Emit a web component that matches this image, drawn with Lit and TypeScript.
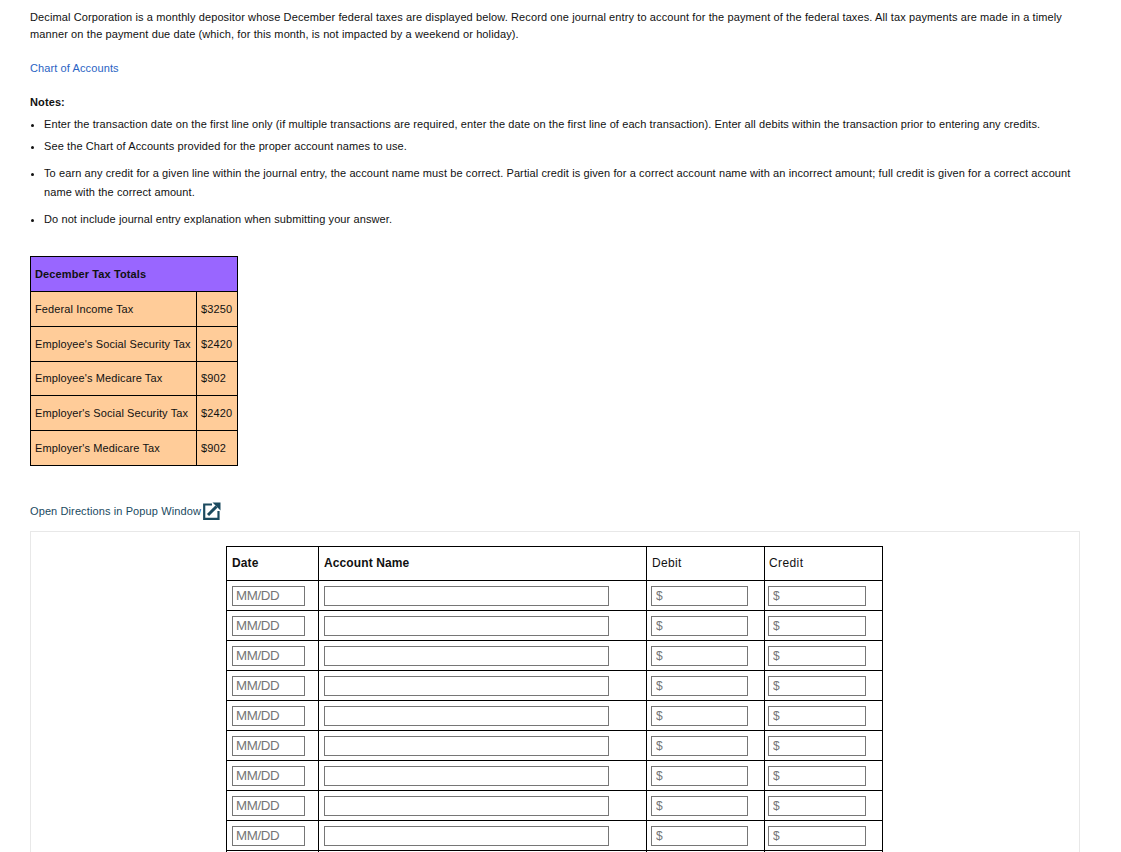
import { LitElement, html, css } from "lit";
import { customElement } from "lit/decorators.js";
import { classMap } from "lit/directives/class-map.js";

const taxes: [string, string][] = [
  ["Federal Income Tax", "$3250"],
  ["Employee's Social Security Tax", "$2420"],
  ["Employee's Medicare Tax", "$902"],
  ["Employer's Social Security Tax", "$2420"],
  ["Employer's Medicare Tax", "$902"],
];

@customElement("app-root")
export class AppRoot extends LitElement {
  static styles = css`
    :host {
      display: block;
      height: 852px;
      overflow: hidden;
      background: #fff;
      color: #111;
      font: 11px/17px "Liberation Sans", Arial, sans-serif;
      letter-spacing: 0.11px;
    }
    .page { padding: 9px 41px 0 30px; }
    p { margin: 0; }
    .link { display: block; margin-top: 17px; color: #2a63c4; }
    .notes { margin-top: 17px; font-weight: 700; }
    ul { list-style: none; margin: 4px 0 0; padding: 0; }
    li { position: relative; padding-left: 14px; line-height: 19px; margin-bottom: 8px; letter-spacing: 0.1px; }
    li.tight { margin-bottom: 3px; }
    li::before {
      content: "";
      position: absolute;
      left: 1px;
      top: 9px;
      width: 3px;
      height: 3px;
      border-radius: 50%;
      background: #111;
    }
    .tax {
      border-collapse: collapse;
      table-layout: fixed;
      width: 207px;
      margin-top: 27px;
      background: #fc9;
      line-height: 14px;
    }
    .tax td, .tax th { border: 1px solid #000; padding: 10px 4px; text-align: left; height: 14px; white-space: nowrap; }
    .tax tr.short td { padding-top: 9px; }
    .tax th { background: #96f; font-weight: 700; }
    .popup {
      display: flex;
      align-items: center;
      gap: 2px;
      margin-top: 35px;
      color: #1b4a5f;
      height: 20px;
    }
    .popup svg { display: block; }
    .box {
      margin-top: 10px;
      border: 1px solid #e8e8e8;
      padding: 14px 0 0;
      height: 400px;
      display: flex;
      justify-content: center;
    }
    .je {
      border-collapse: collapse;
      table-layout: fixed;
      width: 657px;
      height: max-content;
      margin-left: -1px;
    }
    .je th, .je td { border: 1px solid #000; text-align: left; padding: 0 5px; }
    .je th { height: 33px; font-size: 12px; font-weight: 700; }
    .je th.plain { font-weight: 400; letter-spacing: 0.3px; }
    .je th.credit { padding-left: 4px; letter-spacing: 0.4px; }
    .je td { height: 29px; }
    .field {
      display: block;
      box-sizing: border-box;
      height: 20px;
      border: 1px solid #767676;
      background: #fff;
      padding: 0 0 0 3px;
      margin: 0;
      font: 13.33px "Liberation Sans", Arial, sans-serif;
      letter-spacing: -0.4px;
      border-radius: 0;
    }
    .field::placeholder { color: #757575; opacity: 1; }
    .date { width: 73px; }
    .name { width: 285px; }
    .money { width: 97px; margin-left: -1px; padding-left: 4px; font-size: 12px; letter-spacing: 0; }
    .money.last { margin-left: -2px; width: 98px; }
  `;

  render() {
    const rows = Array.from({ length: 10 });
    return html`<div class="page">
      <p>Decimal Corporation is a monthly depositor whose December federal taxes are displayed below. Record one journal entry to account for the payment of the federal taxes. All tax payments are made in a timely manner on the payment due date (which, for this month, is not impacted by a weekend or holiday).</p>
      <a class="link">Chart of Accounts</a>
      <div class="notes">Notes:</div>
      <ul>
        <li class="tight">Enter the transaction date on the first line only (if multiple transactions are required, enter the date on the first line of each transaction). Enter all debits within the transaction prior to entering any credits.</li>
        <li>See the Chart of Accounts provided for the proper account names to use.</li>
        <li>To earn any credit for a given line within the journal entry, the account name must be correct. Partial credit is given for a correct account name with an incorrect amount; full credit is given for a correct account name with the correct amount.</li>
        <li>Do not include journal entry explanation when submitting your answer.</li>
      </ul>
      <table class="tax">
        <colgroup><col style="width:166px" /><col style="width:41px" /></colgroup>
        <tr><th colspan="2">December Tax Totals</th></tr>
        ${taxes.map(([n, v], i) => html`<tr class=${classMap({ short: i === 2 })}><td>${n}</td><td>${v}</td></tr>`)}
      </table>
      <div class="popup">
        <span>Open Directions in Popup Window</span>
        <svg width="18" height="18" viewBox="0 0 18 18" fill="none">
          <path d="M9 2.5H1.2V16.8H15.5V9" stroke="#1b4a5f" stroke-width="2.2"/>
          <path d="M5 13L13.5 4.5" stroke="#1b4a5f" stroke-width="3"/>
          <path d="M9.5 0.5H17.5V8.5Z" fill="#1b4a5f"/>
        </svg>
      </div>
      <div class="box">
        <table class="je">
          <colgroup><col style="width:92px" /><col style="width:328px" /><col style="width:118px" /><col style="width:118px" /></colgroup>
          <tr><th>Date</th><th>Account Name</th><th class="plain">Debit</th><th class="plain credit">Credit</th></tr>
          ${rows.map(() => html`<tr>
            <td><input class="field date" placeholder="MM/DD" /></td>
            <td><input class="field name" /></td>
            <td><input class="field money" placeholder="$" /></td>
            <td><input class="field money last" placeholder="$" /></td>
          </tr>`)}
        </table>
      </div>
    </div>`;
  }
}
